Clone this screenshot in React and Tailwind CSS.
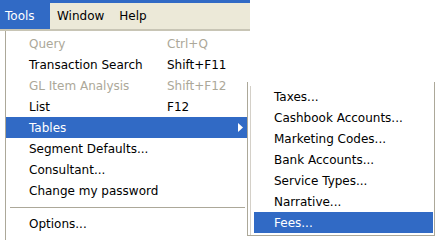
import React from 'react';

const mainItems = [
  { label: 'Query', key: 'Ctrl+Q', disabled: true },
  { label: 'Transaction Search', key: 'Shift+F11' },
  { label: 'GL Item Analysis', key: 'Shift+F12', disabled: true },
  { label: 'List', key: 'F12' },
  { label: 'Tables', sub: true, active: true },
  { label: 'Segment Defaults...' },
  { label: 'Consultant...' },
  { label: 'Change my password' },
  { sep: true },
  { label: 'Options...' },
];

const subItems = [
  'Taxes...',
  'Cashbook Accounts...',
  'Marketing Codes...',
  'Bank Accounts...',
  'Service Types...',
  'Narrative...',
  'Fees...',
];

const MenuRow = ({ item }) => {
  if (item.sep) {
    return (
      <div className="h-[12px] flex items-center pl-[4px] pr-[2px]">
        <div className="h-px w-full bg-[#aca899]" />
      </div>
    );
  }
  let color = 'text-black';
  if (item.disabled) color = 'text-[#aca899]';
  if (item.active) color = 'text-white bg-[#316ac5]';
  return (
    <div className={`relative h-[21px] flex items-center ${color}`}>
      <span className="pl-[23px] w-[161px]">{item.label}</span>
      {item.key && <span>{item.key}</span>}
      {item.sub && (
        <svg className="absolute right-[4px] top-[6px]" width="5" height="9" viewBox="0 0 5 9">
          <path d="M0 0 L5 4.5 L0 9 Z" fill="#fff" />
        </svg>
      )}
    </div>
  );
};

export default function App() {
  return (
    <div
      className="relative w-[441px] h-[240px] bg-white overflow-hidden text-[12px]"
      style={{ fontFamily: '"DejaVu Sans", Tahoma, sans-serif' }}
    >
      {/* menu bar */}
      <div className="w-[250px] h-[31px] border-t-[3px] border-[#316ac5] bg-[#ece9d8] border-b-[2px] border-b-[#c8c5b5] flex items-stretch">
        <div className="w-[50px] bg-[#316ac5] text-white flex items-center pl-[5px] -mt-[1px]">Tools</div>
        <div className="flex items-center pl-[7px] text-black">Window</div>
        <div className="flex items-center pl-[15px] text-black">Help</div>
      </div>

      {/* Tools dropdown */}
      <div className="absolute left-[5px] top-[31px] w-[242px] h-[220px] border-l border-[#aca899] bg-white pt-[2px]">
        {mainItems.map((item, i) => (
          <MenuRow key={i} item={item} />
        ))}
      </div>

      {/* Tables submenu */}
      <div className="absolute left-[247px] top-[82px] w-[188px] h-[154px] bg-white border-l border-[#aca899] border-r border-r-[#aca899] border-b border-b-[#aca899] pl-[2px] pr-[1px] pt-[4px]">
        <div className="border-l border-[#d4d0c8] h-full pl-[3px]">
          {subItems.map((s, i) => (
            <div
              key={s}
              className={`h-[21px] flex items-center pl-[20px] ${i === subItems.length - 1 ? 'bg-[#316ac5] text-white' : 'text-black'}`}
            >
              {s}
            </div>
          ))}
        </div>
      </div>
    </div>
  );
}
